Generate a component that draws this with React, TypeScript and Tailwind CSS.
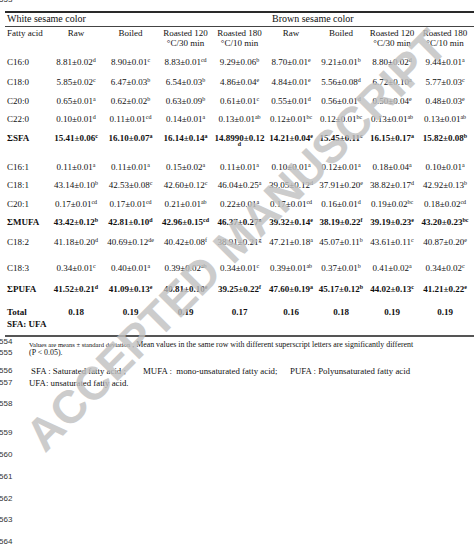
import type { ReactNode } from "react"

type Cell = { v: string; s?: string; wrap?: boolean }
type Row = { label: ReactNode; cells: Cell[]; h: string; bold?: boolean }

const c = (v: string, s?: string): Cell => ({ v, s })

const grid = "grid grid-cols-[49px_54px_55px_55px_53px_50px_50px_52px_54px]"

const rows: Row[] = [
  {
    label: "C16:0",
    h: "h-[20px]",
    cells: [c("8.81±0.02", "d"), c("8.90±0.01", "c"), c("8.83±0.01", "cd"), c("9.29±0.06", "b"), c("8.70±0.01", "e"), c("9.21±0.01", "b"), c("8.80±0.02", "d"), c("9.44±0.01", "a")],
  },
  {
    label: "C18:0",
    h: "h-[19px]",
    cells: [c("5.85±0.02", "c"), c("6.47±0.03", "b"), c("6.54±0.03", "b"), c("4.86±0.04", "e"), c("4.84±0.01", "e"), c("5.56±0.08", "d"), c("6.72±0.10", "a"), c("5.77±0.03", "c")],
  },
  {
    label: "C20:0",
    h: "h-[18px]",
    cells: [c("0.65±0.01", "a"), c("0.62±0.02", "b"), c("0.63±0.09", "b"), c("0.61±0.01", "c"), c("0.55±0.01", "d"), c("0.56±0.01", "d"), c("0.50±0.04", "e"), c("0.48±0.03", "e")],
  },
  {
    label: "C22:0",
    h: "h-[19px]",
    cells: [c("0.10±0.01", "d"), c("0.11±0.01", "cd"), c("0.14±0.01", "a"), c("0.13±0.01", "ab"), c("0.12±0.01", "bc"), c("0.12±0.01", "bc"), c("0.13±0.01", "ab"), c("0.13±0.01", "ab")],
  },
  {
    label: "ΣSFA",
    h: "h-[29px]",
    bold: true,
    cells: [c("15.41±0.06", "c"), c("16.10±0.07", "a"), c("16.14±0.14", "a"), { v: "14.8990±0.12", s: "d", wrap: true }, c("14.21±0.04", "e"), c("15.45±0.11", "c"), c("16.15±0.17", "a"), c("15.82±0.08", "b")],
  },
  {
    label: "C16:1",
    h: "h-[18px]",
    cells: [c("0.11±0.01", "a"), c("0.11±0.01", "a"), c("0.15±0.02", "a"), c("0.11±0.01", "a"), c("0.10±0.01", "a"), c("0.12±0.01", "a"), c("0.18±0.04", "a"), c("0.10±0.01", "a")],
  },
  {
    label: "C18:1",
    h: "h-[19px]",
    cells: [c("43.14±0.10", "b"), c("42.53±0.08", "c"), c("42.60±0.12", "c"), c("46.04±0.25", "a"), c("39.05±0.12", "d"), c("37.91±0.20", "e"), c("38.82±0.17", "d"), c("42.92±0.13", "b")],
  },
  {
    label: "C20:1",
    h: "h-[18px]",
    cells: [c("0.17±0.01", "cd"), c("0.17±0.01", "cd"), c("0.21±0.01", "ab"), c("0.22±0.01", "a"), c("0.17±0.01", "cd"), c("0.16±0.01", "d"), c("0.19±0.02", "bc"), c("0.18±0.02", "cd")],
  },
  {
    label: "ΣMUFA",
    h: "h-[20px]",
    bold: true,
    cells: [c("43.42±0.12", "b"), c("42.81±0.10", "d"), c("42.96±0.15", "cd"), c("46.37±0.27", "a"), c("39.32±0.14", "e"), c("38.19±0.22", "f"), c("39.19±0.23", "e"), c("43.20±0.23", "bc")],
  },
  {
    label: "C18:2",
    h: "h-[26px]",
    cells: [c("41.18±0.20", "d"), c("40.69±0.12", "de"), c("40.42±0.08", "f"), c("38.91±0.21", "g"), c("47.21±0.18", "a"), c("45.07±0.11", "b"), c("43.61±0.11", "c"), c("40.87±0.20", "e")],
  },
  {
    label: "C18:3",
    h: "h-[21px]",
    cells: [c("0.34±0.01", "c"), c("0.40±0.01", "a"), c("0.39±0.02", "ab"), c("0.34±0.01", "c"), c("0.39±0.01", "ab"), c("0.37±0.01", "b"), c("0.41±0.02", "a"), c("0.34±0.02", "c")],
  },
  {
    label: "ΣPUFA",
    h: "h-[23px]",
    bold: true,
    cells: [c("41.52±0.21", "d"), c("41.09±0.13", "e"), c("40.81±0.10", "e"), c("39.25±0.22", "f"), c("47.60±0.19", "a"), c("45.17±0.12", "b"), c("44.02±0.13", "c"), c("41.21±0.22", "e")],
  },
  {
    label: (
      <>
        Total
        <br />
        <span className="leading-[11px]">SFA: UFA</span>
      </>
    ),
    h: "h-[33px]",
    bold: true,
    cells: ["0.18", "0.19", "0.19", "0.17", "0.16", "0.18", "0.19", "0.19"].map((v) => c(v)),
  },
]

const heads: ReactNode[] = [
  "Raw",
  "Boiled",
  <>Roasted 120<br />°C/30 min</>,
  <>Roasted 180<br />°C/10 min</>,
  "Raw",
  "Boiled",
  <>Roasted 120<br />°C/30 min</>,
  <>Roasted 180<br />°C/10 min</>,
]

function Val({ cell }: { cell: Cell }) {
  if (cell.wrap) {
    return (
      <div className="flex flex-col items-center">
        <span className="whitespace-nowrap">{cell.v}</span>
        <span className="-mt-[3px] text-[6px] leading-[6px]">{cell.s}</span>
      </div>
    )
  }
  return (
    <span className="whitespace-nowrap">
      {cell.v}
      {cell.s && <sup className="top-[-3.5px] text-[6px]">{cell.s}</sup>}
    </span>
  )
}

const notes: { n: string; h: string; body?: ReactNode }[] = [
  {
    n: "554",
    h: "h-[11px]",
    body: (
      <span className="whitespace-nowrap">
        <span className="text-[6.6px]">Values are means ± standard deviation</span>
        <span className="text-[7.9px]"> , Mean values in the same row with different superscript letters are significantly different</span>
      </span>
    ),
  },
  { n: "555", h: "h-[18.5px]", body: <span className="text-[7.9px]">(P &lt; 0.05).</span> },
  {
    n: "556",
    h: "h-[12px]",
    body: (
      <div className="flex text-[8.8px] whitespace-nowrap">
        <span className="w-[114px] pl-[2px]">SFA : Saturated fatty acid ;</span>
        <span className="w-[147px]">MUFA :&nbsp; mono-unsaturated fatty acid;</span>
        <span>PUFA : Polyunsaturated fatty acid</span>
      </div>
    ),
  },
  { n: "557", h: "h-[21px]", body: <span className="text-[8.8px]">UFA: unsaturated fatty acid.</span> },
  { n: "558", h: "h-[29px]" },
  { n: "559", h: "h-[22px]" },
  { n: "560", h: "h-[22px]" },
  { n: "561", h: "h-[22px]" },
  { n: "562", h: "h-[21px]" },
  { n: "563", h: "h-[22px]" },
  { n: "564", h: "h-[22px]" },
]

export default function App() {
  return (
    <div className="relative h-[545px] w-[474px] overflow-hidden bg-white font-['Liberation_Serif',serif] text-[#111]">
      <div className="flex h-[11px] flex-col">
        <div className="-mt-[5px] -ml-[1px] font-['Liberation_Sans',sans-serif] text-[8px] leading-[10px] text-[#333]">553</div>
      </div>
      <div className="ml-[5px] h-[2px] bg-[#2a2a2a]" />

      <div className="flex h-[13px] text-[10px] leading-[11px]">
        <div className="w-[265px] pl-[7px]">White sesame color</div>
        <div className="pl-[7px]">Brown sesame color</div>
      </div>
      <div className="ml-[5px] h-px bg-[#444]" />

      <div className={`${grid} h-[25px] pt-[1px] text-[9px] leading-[10px]`}>
        <div className="pl-[7px] whitespace-nowrap">Fatty acid</div>
        {heads.map((h, i) => (
          <div key={i} className="text-center whitespace-nowrap">
            {h}
          </div>
        ))}
      </div>

      {rows.map((r, i) => (
        <div key={i} className={`${grid} items-start pt-[4px] text-[9px] leading-[12px] ${r.h} ${r.bold ? "font-bold" : ""}`}>
          <div className="pl-[7px] whitespace-nowrap">{r.label}</div>
          {r.cells.map((cell, j) => (
            <div key={j} className="flex justify-center">
              <Val cell={cell} />
            </div>
          ))}
        </div>
      ))}

      <div className="ml-[5px] h-[1.5px] bg-[#555]" />

      {notes.map((n) => (
        <div key={n.n} className={`flex items-start leading-[10px] ${n.h}`}>
          <div className="-ml-[1px] w-[30px] shrink-0 font-['Liberation_Sans',sans-serif] text-[8px] text-[#333]">{n.n}</div>
          {n.body}
        </div>
      ))}

      <div className="pointer-events-none absolute left-[236px] top-[240px] -translate-x-1/2 -translate-y-1/2 -rotate-45 whitespace-nowrap font-['Liberation_Sans',sans-serif] text-[46px] leading-none font-bold text-[#c0c0c0] opacity-80">
        ACCEPTED MANUSCRIPT
      </div>
    </div>
  )
}
